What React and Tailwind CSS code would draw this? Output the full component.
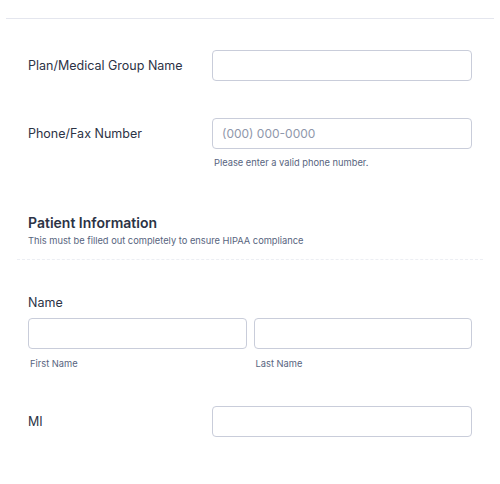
import React from "react";

const inputCls = "h-[31px] rounded-[4px] border border-[#c9cdda] bg-white";

export default function App() {
  return (
    <div className="w-[500px] h-[484px] bg-white overflow-hidden" style={{ fontFamily: "Inter, 'Noto Sans', sans-serif" }}>
      <div className="pt-[18px] px-[6px]">
        <div className="h-px bg-[#e4e6ee]" />
      </div>

      <div className="px-[28px]">
        <div className="mt-[31px] flex items-center">
          <div className="w-[184px] pt-[2px] text-[12.5px] text-[#2c3345]">Plan/Medical Group Name</div>
          <div className={`${inputCls} w-[260px]`} />
        </div>

        <div className="mt-[37px] flex items-center">
          <div className="w-[184px] pt-[2px] text-[12.5px] text-[#2c3345]">Phone/Fax Number</div>
          <div className={`${inputCls} w-[260px] flex items-center px-[9px] text-[12px] text-[#8f97ab]`}>(000) 000-0000</div>
        </div>
        <div className="ml-[186px] mt-[8px] text-[9.3px] leading-[12px] text-[#57647e]">Please enter a valid phone number.</div>

        <div className="mt-[44px] text-[14px] leading-[20px] font-semibold text-[#2c3345]">Patient Information</div>
        <div className="mt-[2px] text-[9.3px] leading-[12px] text-[#57647e]">This must be filled out completely to ensure HIPAA compliance</div>
      </div>

      <div className="mt-[12px] px-[17px]">
        <div className="border-t border-dashed border-[#eceef3]" />
      </div>

      <div className="px-[28px]">
        <div className="mt-[35px] text-[12.5px] leading-[16px] text-[#2c3345]">Name</div>
        <div className="mt-[7px] flex gap-[7px]">
          <div className="flex-1">
            <div className={`${inputCls} w-full`} />
            <div className="mt-[9px] ml-[2px] text-[9.3px] leading-[12px] text-[#57647e]">First Name</div>
          </div>
          <div className="flex-1">
            <div className={`${inputCls} w-full`} />
            <div className="mt-[9px] ml-[2px] text-[9.3px] leading-[12px] text-[#57647e]">Last Name</div>
          </div>
        </div>

        <div className="mt-[36px] flex items-center">
          <div className="w-[184px] pt-[2px] text-[12.5px] text-[#2c3345]">MI</div>
          <div className={`${inputCls} w-[260px]`} />
        </div>
      </div>
    </div>
  );
}
